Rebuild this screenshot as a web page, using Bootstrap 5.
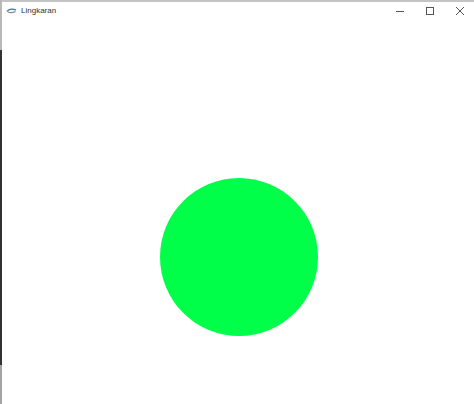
<!DOCTYPE html>
<html lang="id">
<head>
<meta charset="utf-8">
<title>Lingkaran</title>
<link href="https://cdn.jsdelivr.net/npm/bootstrap@5.3.0/dist/css/bootstrap.min.css" rel="stylesheet">
<style>
html, body { height: 404px; overflow: hidden; background: #fff; }
.win-shell { width: 474px; height: 404px; }
.edge-strip { width: 2px; flex: none; }
.edge-a { height: 50px; background: #b9b9b9; }
.edge-b { height: 315px; background: #333; }
.edge-c { height: 39px; background: #a4a4a4; }
.win-main { min-width: 0; }
.top-rule { height: 2px; background: #c4c4c4; }
.title-row { height: 17px; padding-left: 4px; font: 8px/17px "Liberation Sans", Arial, sans-serif; color: #333; }
.title-row svg { flex: none; }
.title-text { margin-left: 4px; }
.ctl-wrap { margin-right: -1px; }
.ctl-btn { width: 30px; height: 17px; }
.paint-area { padding: 159px 0 0 158px; }
.disc { width: 158px; height: 158px; border-radius: 50%; background: #00ff48; }
</style>
</head>
<body>
<div class="win-shell d-flex">
  <div class="edge-strip d-flex flex-column">
    <div class="edge-a"></div>
    <div class="edge-b"></div>
    <div class="edge-c"></div>
  </div>
  <div class="win-main flex-grow-1 d-flex flex-column">
    <div class="top-rule"></div>
    <div class="title-row d-flex align-items-center">
      <svg width="11" height="8" viewBox="0 0 11 8" aria-hidden="true">
        <path d="M1 4.4C3 2 7 1.6 10 3" fill="none" stroke="#4f86b0" stroke-width="1.6"/>
        <path d="M2 5C4.5 6 7 5.6 9.5 4.6" fill="none" stroke="#8a8a8a" stroke-width="1.2"/>
      </svg>
      <span class="title-text">Lingkaran</span>
      <div class="ctl-wrap ms-auto d-flex">
        <div class="ctl-btn d-flex align-items-center justify-content-center">
          <svg width="10" height="10" viewBox="0 0 10 10" aria-hidden="true"><path d="M1 5.5H9" stroke="#555" stroke-width="1"/></svg>
        </div>
        <div class="ctl-btn d-flex align-items-center justify-content-center">
          <svg width="10" height="10" viewBox="0 0 10 10" aria-hidden="true"><rect x="1.5" y="1.5" width="7" height="7" fill="none" stroke="#555" stroke-width="1"/></svg>
        </div>
        <div class="ctl-btn d-flex align-items-center justify-content-center">
          <svg width="10" height="10" viewBox="0 0 10 10" aria-hidden="true"><path d="M1 1L9 9M9 1L1 9" stroke="#555" stroke-width="1"/></svg>
        </div>
      </div>
    </div>
    <div class="paint-area flex-grow-1">
      <div class="disc"></div>
    </div>
  </div>
</div>
<script src="https://cdn.jsdelivr.net/npm/bootstrap@5.3.0/dist/js/bootstrap.bundle.min.js"></script>
</body>
</html>
